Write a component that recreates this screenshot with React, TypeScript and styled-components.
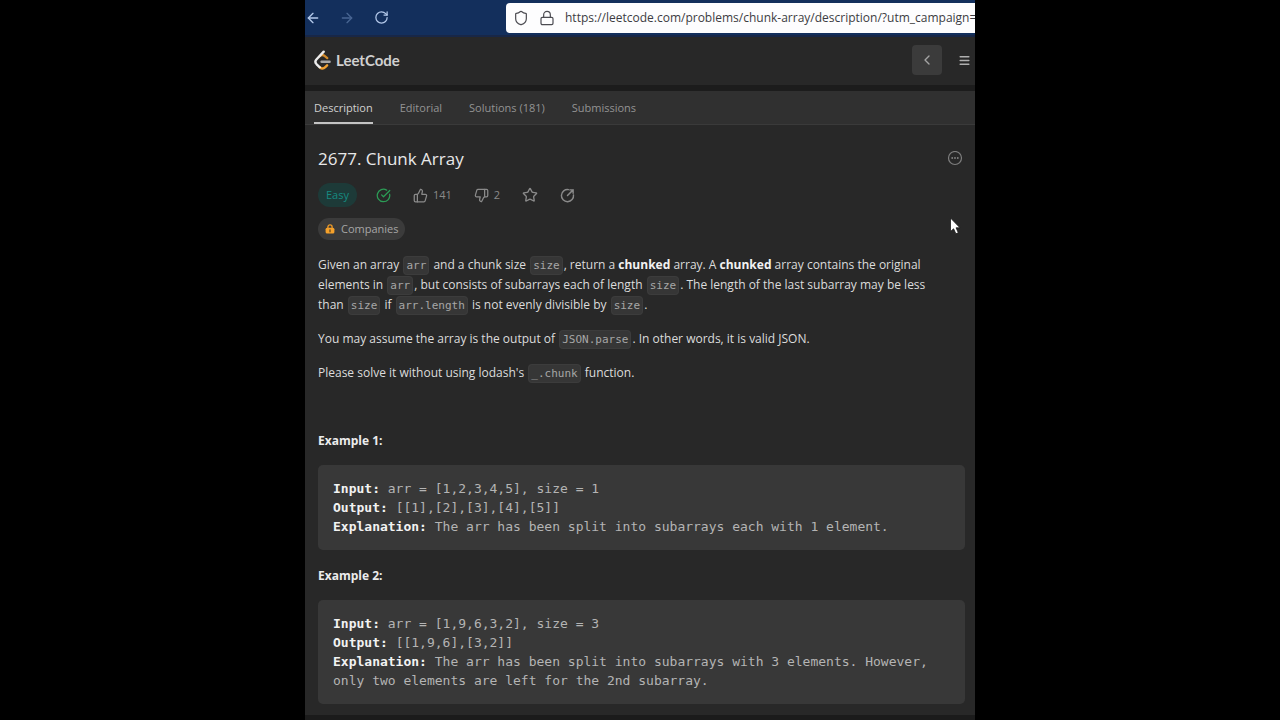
import React from 'react';
import styled, { createGlobalStyle, css } from 'styled-components';
import { ArrowLeft, ArrowRight, ChevronLeft, CircleCheckBig, Lock, Menu, RotateCw, Shield, Star, ThumbsDown, ThumbsUp } from 'lucide-react';

const sans = `'Open Sans', 'Noto Sans', sans-serif`;
const mono = `'DejaVu Sans Mono', monospace`;

const GlobalStyle = createGlobalStyle`
  *, *::before, *::after { box-sizing: border-box; }
  body { margin: 0; background: #000; color: #dcdcdc; font-family: ${sans}; font-size: 12px; line-height: 20px; }
  button, input { font: inherit; }
  svg { display: block; flex: none; }
`;

const Window = styled.div`
  position: relative;
  display: flex;
  flex-direction: column;
  width: 100%;
  max-width: 670px;
  min-height: 100vh;
  margin: 0 auto;
  background: #282828;
  overflow: hidden;
`;

const iconButton = css`
  display: flex;
  align-items: center;
  justify-content: center;
  padding: 0;
  border: 0;
  background: none;
  color: #8a8a8a;
`;

const BrowserBar = styled.nav`
  display: flex;
  align-items: center;
  height: 37px;
  background: #132f5c;
  border-bottom: 2px solid #182747;
`;

const NavButtons = styled.div`
  display: flex;
  gap: 18px;
  width: 30%;
`;

const NavButton = styled.button`
  ${iconButton}
  width: 16px;
  height: 16px;
  color: #b4c9ea;
  &:disabled { color: #486592; }
`;

const AddressBar = styled.label`
  display: flex;
  flex: 1;
  align-items: center;
  gap: 10px;
  min-width: 0;
  height: 30px;
  padding-left: 7px;
  border-radius: 4px 0 0 4px;
  background: #fdfdfe;
  color: #4c4c52;
`;

const AddressInput = styled.input`
  flex: 1;
  min-width: 0;
  padding: 0;
  border: 0;
  outline: 0;
  background: none;
  color: #3c3c42;
  font-size: 12px;
`;

const Header = styled.header`
  display: flex;
  align-items: center;
  justify-content: space-between;
  height: 54px;
  padding: 0 4px 2px 8px;
  border-bottom: 6px solid #1c1c1c;
`;

const Brand = styled.a`
  display: flex;
  align-items: center;
  gap: 4px;
  color: #d0d0d0;
  font: 700 15px/20px Lato, sans-serif;
  text-decoration: none;
`;

const HeaderActions = styled.div`
  display: flex;
  align-items: center;
  gap: 16px;
`;

const CollapseButton = styled.button`
  ${iconButton}
  width: 30px;
  height: 30px;
  border-radius: 4px;
  background: #3b3b3b;
  color: #a4a4a4;
`;

const MenuButton = styled.button`
  ${iconButton}
  color: #b0b0b0;
`;

const Tabs = styled.nav`
  display: flex;
  gap: 27px;
  height: 34px;
  padding: 0 9px;
  border-bottom: 1px solid #3a3a3a;
  background: #303030;
`;

const Tab = styled.a<{ $active?: boolean }>`
  border-bottom: 2px solid ${p => (p.$active ? '#c4c4c4' : 'transparent')};
  color: ${p => (p.$active ? '#d0d0d0' : '#939393')};
  font-size: 11px;
  line-height: 34px;
  text-decoration: none;
  white-space: nowrap;
`;

const Problem = styled.main`
  flex: 1;
  padding: 22px 10px 11px 13px;
`;

const TitleRow = styled.div`
  display: flex;
  align-items: center;
  justify-content: space-between;
  padding-right: 2px;
`;

const Title = styled.h1`
  margin: 0;
  color: #e8e8e8;
  font-size: 17px;
  font-weight: 400;
  line-height: 24px;
`;

const MoreButton = styled.button`
  ${iconButton}
`;

const Stats = styled.div`
  display: flex;
  align-items: center;
  gap: 22px;
  margin-top: 12px;
  color: #858585;
`;

const Rating = styled.div`
  display: flex;
  align-items: center;
  gap: 19px;
`;

const Pill = styled.span`
  padding: 0 8px;
  border-radius: 12px;
  background: #1d3a38;
  color: #168a80;
  font-size: 11px;
  line-height: 24px;
`;

const Solved = styled.span`
  color: #2c9c56;
`;

const StatButton = styled.button`
  ${iconButton}
  gap: 5px;
  font-size: 11px;
  line-height: 20px;
`;

const CompaniesButton = styled.button`
  ${iconButton}
  gap: 5px;
  height: 22px;
  margin: 11px 0 15px;
  padding: 0 6px;
  border-radius: 11px;
  background: #3b3b3b;
  color: #a6a6a6;
  font-size: 11px;
`;

const Text = styled.p`
  margin: 0 0 14px;
  padding-right: 24px;
`;

const Strong = styled.strong`
  color: #f2f2f2;
  font-weight: 700;
`;

const Code = styled.code`
  margin: 0 1px;
  padding: 2px;
  border: 1px solid #3c3c3c;
  border-radius: 4px;
  background: #363636;
  color: #a6a6a6;
  font: 11px/13px ${mono};
`;

const ExampleTitle = styled.h2`
  margin: 0;
  color: #ececec;
  font-size: 12px;
  font-weight: 700;
  line-height: 20px;
`;

const Examples = styled.section`
  display: flex;
  flex-direction: column;
  gap: 16px;
  margin-top: 48px;
`;

const ExampleBlock = styled.pre`
  margin: 14px 0 0;
  padding: 14px 15px;
  border-radius: 5px;
  background: #383838;
  color: #b4b4b4;
  font: 13px/19px ${mono};
  white-space: pre-wrap;
`;

const Footer = styled.footer`
  height: 5px;
  background: #1b1b1b;
`;

const Pointer = styled.svg`
  position: absolute;
  top: 217px;
  right: 13px;
`;

const LeetCodeMark = () => (
  <svg width="19" height="22" viewBox="0 0 24 24" fill="none" strokeWidth="3" strokeLinecap="round" aria-hidden="true">
    <path d="M8.5 7.3C10.2 5.5 12.8 5.4 14.6 6.8L18 9.6" stroke="#d08a2c" />
    <path d="M8.6 21.2C11 23.3 13.6 22.8 15.5 20.9L17.8 18.7" stroke="#f0a032" />
    <path d="M13.5 1.5L4.3 11.3C2.7 13.1 2.9 15.7 4.6 17.4L8.6 21.2" stroke="#ececec" />
    <path d="M10.8 14.2H21" stroke="#a8a8a8" />
  </svg>
);

const ShareIcon = () => (
  <svg width="15" height="15" viewBox="0 0 24 24" fill="none" stroke="currentColor" strokeWidth="2.3" strokeLinecap="round" strokeLinejoin="round" aria-hidden="true">
    <path d="M13.5 2.6A9.7 9.7 0 1 0 21.6 11" />
    <path d="M12 12L21 3M15.8 3H21V8.4" />
  </svg>
);

const MoreIcon = () => (
  <svg width="16" height="16" viewBox="0 0 16 16" aria-hidden="true">
    <circle cx="8" cy="7" r="6.5" fill="none" stroke="#7e7e7e" strokeWidth="1.2" />
    <g fill="#858585">
      <circle cx="5.2" cy="7" r=".9" />
      <circle cx="8" cy="7" r=".9" />
      <circle cx="10.8" cy="7" r=".9" />
    </g>
  </svg>
);

const PremiumLock = () => (
  <svg width="12" height="12" viewBox="0 0 12 12" fill="none" aria-hidden="true">
    <path d="M3.9 5.2V3.9a2.1 2.1 0 0 1 4.2 0v1.3" stroke="#f09c28" strokeWidth="1.3" />
    <rect x="1.6" y="4.8" width="8.8" height="5.8" rx="1.5" fill="#f5a12b" />
    <path d="M6 6.8v2" stroke="#5b421c" strokeWidth="1.2" strokeLinecap="round" />
  </svg>
);

const examples = [
  {
    input: 'arr = [1,2,3,4,5], size = 1',
    output: '[[1],[2],[3],[4],[5]]',
    explanation: 'The arr has been split into subarrays each with 1 element.',
  },
  {
    input: 'arr = [1,9,6,3,2], size = 3',
    output: '[[1,9,6],[3,2]]',
    explanation: 'The arr has been split into subarrays with 3 elements. However, only two elements are left for the 2nd subarray.',
  },
];

export default function App() {
  return (
    <>
      <GlobalStyle />
      <Window>
        <BrowserBar aria-label="Browser">
          <NavButtons>
            <NavButton aria-label="Back"><ArrowLeft size={16} /></NavButton>
            <NavButton aria-label="Forward" disabled><ArrowRight size={16} /></NavButton>
            <NavButton aria-label="Reload"><RotateCw size={15} /></NavButton>
          </NavButtons>
          <AddressBar>
            <Shield size={16} strokeWidth={1.8} />
            <Lock size={16} strokeWidth={1.8} />
            <AddressInput
              aria-label="Address"
              defaultValue="https://leetcode.com/problems/chunk-array/description/?utm_campaign=PostD21"
            />
          </AddressBar>
        </BrowserBar>
        <Header>
          <Brand href="#home"><LeetCodeMark />LeetCode</Brand>
          <HeaderActions>
            <CollapseButton aria-label="Previous problem"><ChevronLeft size={16} /></CollapseButton>
            <MenuButton aria-label="Problem list"><Menu size={13} strokeWidth={2.6} /></MenuButton>
          </HeaderActions>
        </Header>
        <Tabs aria-label="Problem sections">
          <Tab href="#description" $active aria-current="page">Description</Tab>
          <Tab href="#editorial">Editorial</Tab>
          <Tab href="#solutions">Solutions (181)</Tab>
          <Tab href="#submissions">Submissions</Tab>
        </Tabs>
        <Problem>
          <TitleRow>
            <Title>2677. Chunk Array</Title>
            <MoreButton aria-label="More"><MoreIcon /></MoreButton>
          </TitleRow>
          <Stats>
            <Rating>
              <Pill>Easy</Pill>
              <Solved><CircleCheckBig size={15} aria-label="Solved" /></Solved>
            </Rating>
            <StatButton aria-label="Like"><ThumbsUp size={15} />141</StatButton>
            <StatButton aria-label="Dislike"><ThumbsDown size={15} />2</StatButton>
            <StatButton aria-label="Favorite"><Star size={16} /></StatButton>
            <StatButton aria-label="Share"><ShareIcon /></StatButton>
          </Stats>
          <CompaniesButton><PremiumLock />Companies</CompaniesButton>
          <Text>
            Given an array <Code>arr</Code> and a chunk size <Code>size</Code>, return a <Strong>chunked</Strong> array.
            A <Strong>chunked</Strong> array contains the original elements in <Code>arr</Code>, but consists of subarrays
            each of length <Code>size</Code>. The length of the last subarray may be less than <Code>size</Code> if{' '}
            <Code>arr.length</Code> is not evenly divisible by <Code>size</Code>.
          </Text>
          <Text>
            You may assume the array is the output of <Code>JSON.parse</Code>. In other words, it is valid JSON.
          </Text>
          <Text>
            Please solve it without using lodash's <Code>_.chunk</Code> function.
          </Text>
          <Examples>
            {examples.map((e, i) => (
              <article key={e.input}>
                <ExampleTitle>Example {i + 1}:</ExampleTitle>
                <ExampleBlock>
                  <Strong>Input:</Strong> {e.input}{'\n'}
                  <Strong>Output:</Strong> {e.output}{'\n'}
                  <Strong>Explanation:</Strong> {e.explanation}
                </ExampleBlock>
              </article>
            ))}
          </Examples>
        </Problem>
        <Footer />
        <Pointer width="13" height="18" viewBox="0 0 13 18" aria-hidden="true">
          <path d="M1.5 1V14.5L4.6 11.8L6.9 16.8L9.3 15.7L7.1 10.8H11Z" fill="#fff" stroke="#1a1a1a" strokeWidth=".8" />
        </Pointer>
      </Window>
    </>
  );
}
